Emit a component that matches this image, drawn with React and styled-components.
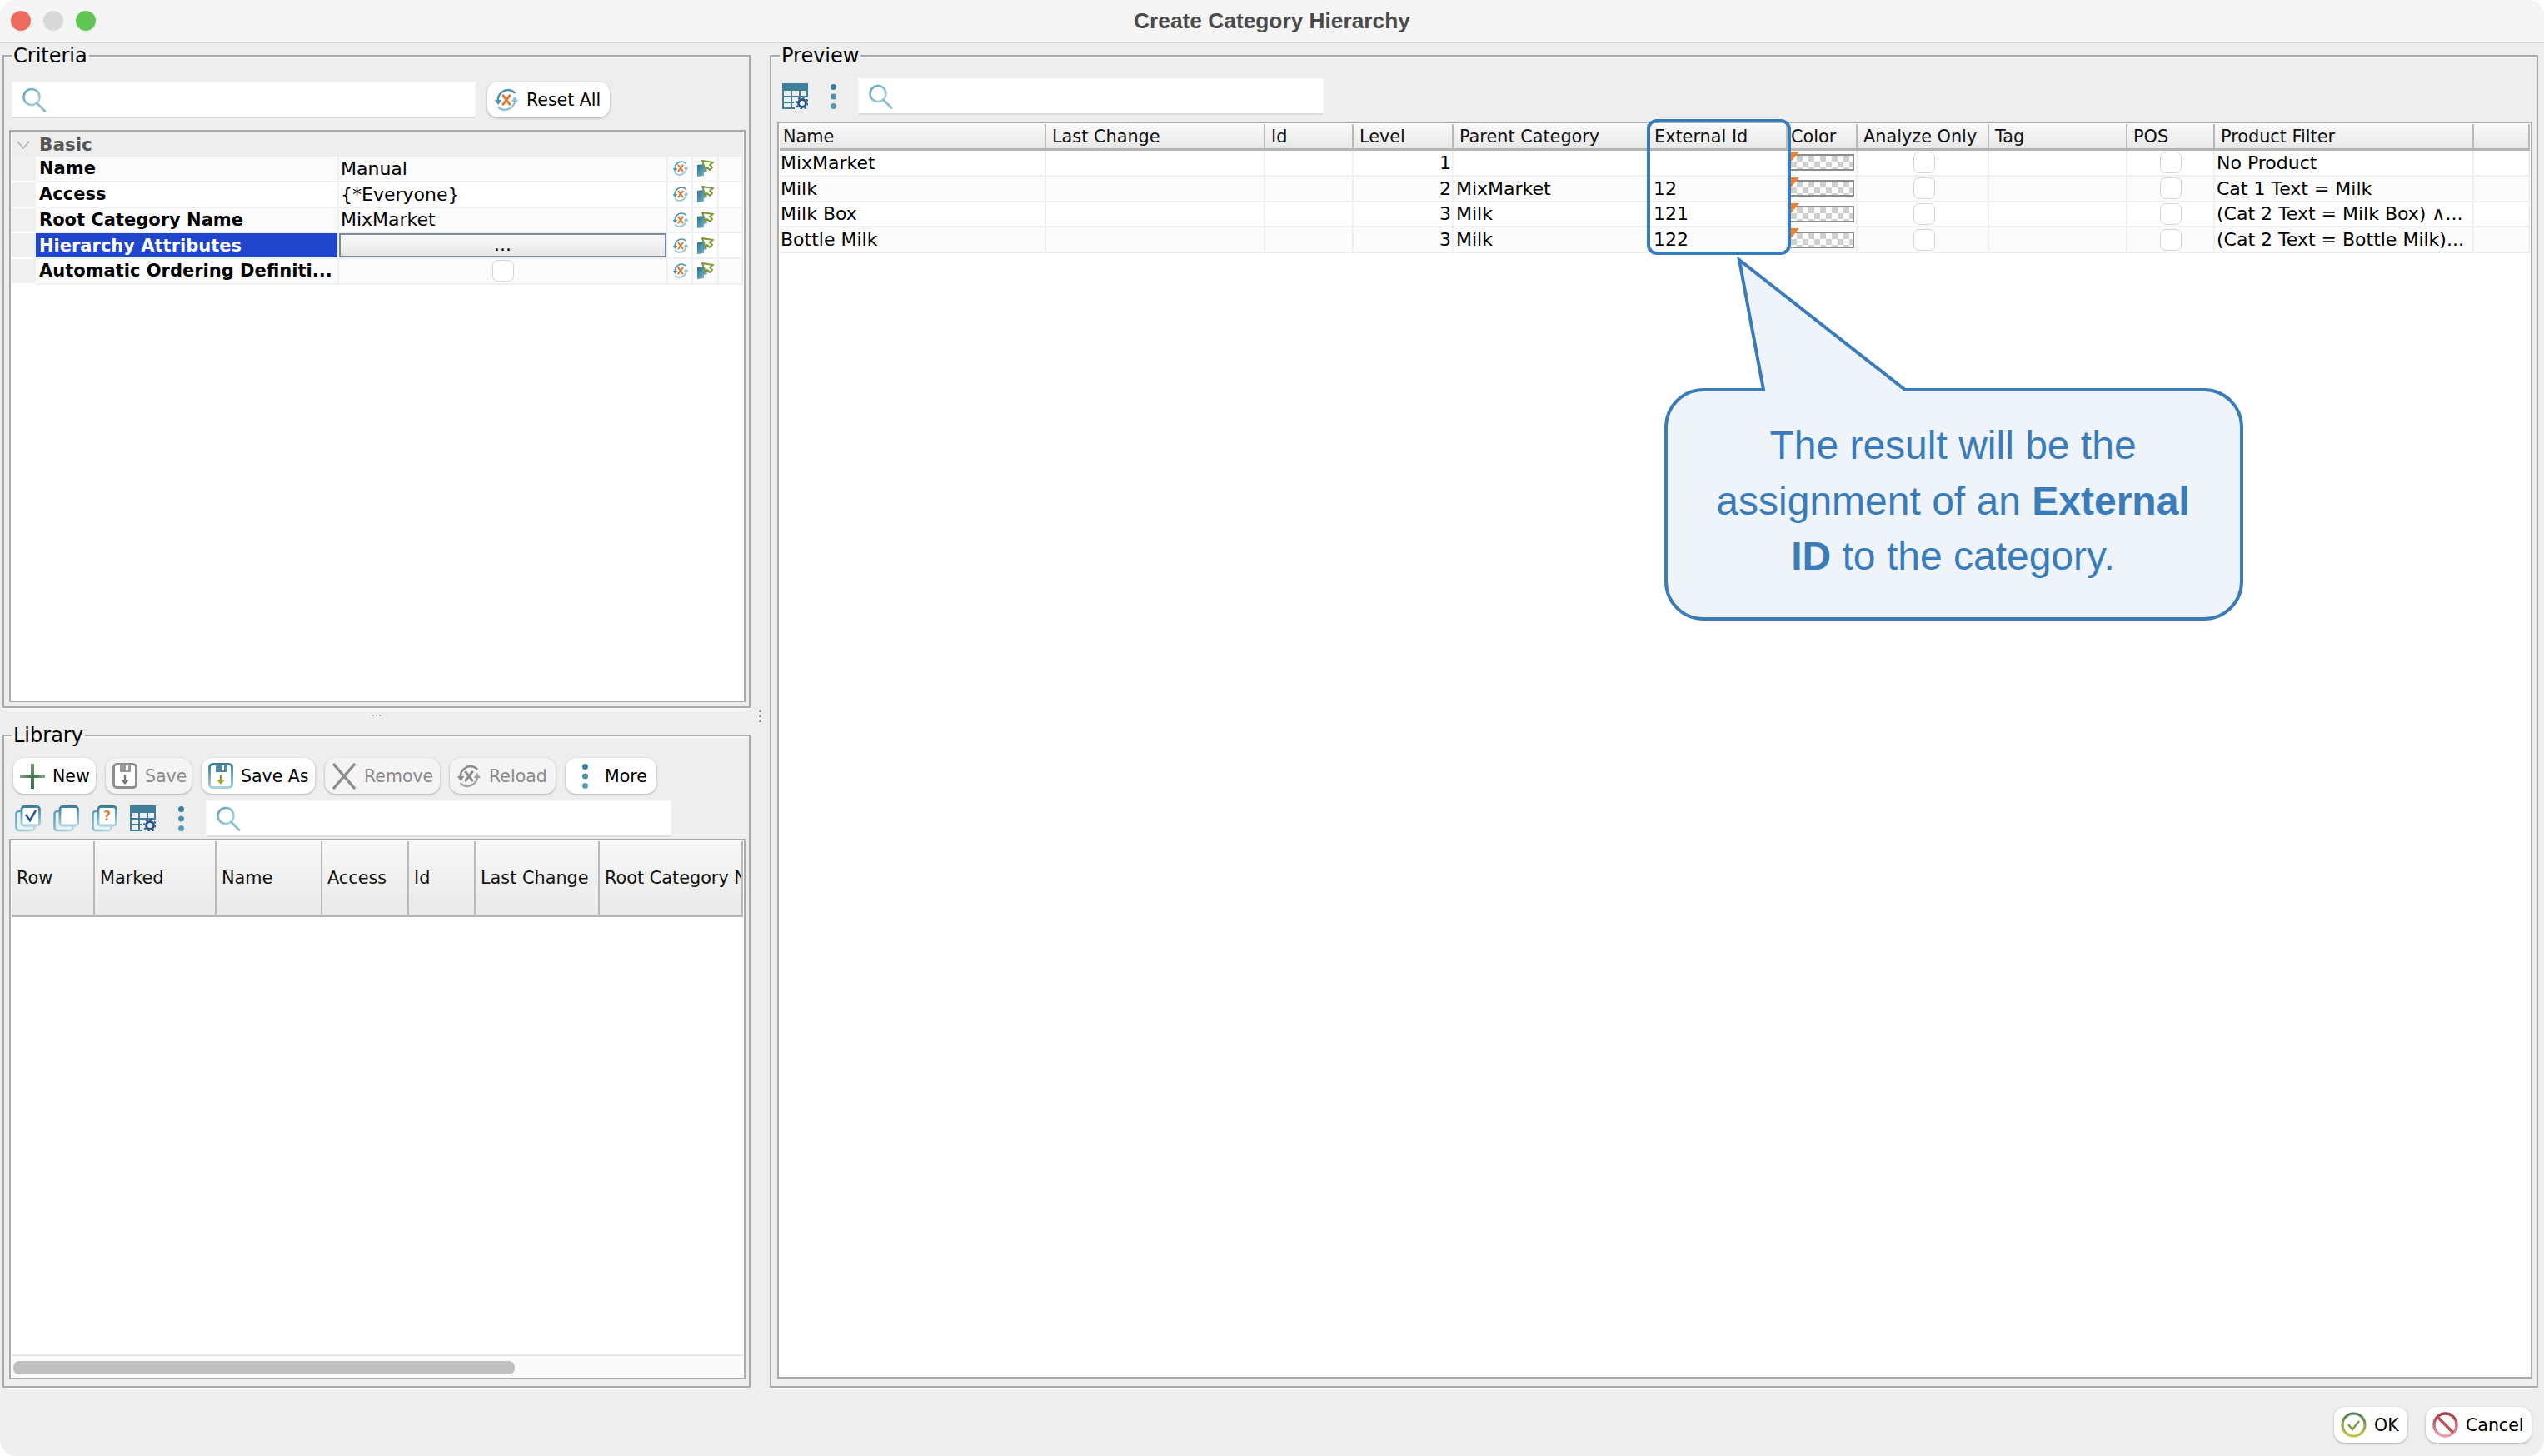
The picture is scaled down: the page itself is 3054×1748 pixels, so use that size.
import React from "react";
import styled, { createGlobalStyle } from "styled-components";

const GlobalStyle = createGlobalStyle`
  html, body { margin: 0; padding: 0; background: #fff; overflow: hidden; }
  #root { width: 3054px; height: 1748px; }
  * { box-sizing: border-box; }
`;

const uiFont = `"DejaVu Sans", "Liberation Sans", sans-serif`;

/* ---------- window chrome ---------- */

const Window = styled.div`
  width: 3054px;
  height: 1748px;
  background: #eeeeee;
  border-radius: 20px;
  overflow: hidden;
  display: flex;
  flex-direction: column;
  font-family: ${uiFont};
  color: #000;
`;

const TitleBar = styled.div`
  height: 52px;
  flex: none;
  display: grid;
  grid-template-columns: 1fr auto 1fr;
  align-items: center;
  background: #f5f5f5;
  border-bottom: 2px solid #d2d2d2;
`;

const Lights = styled.div`
  display: flex;
  gap: 15px;
  padding-left: 13px;
`;

const Light = styled.span`
  width: 24px;
  height: 24px;
  border-radius: 50%;
  background: ${(p) => p.$color};
`;

const Title = styled.div`
  font: bold 26.3px "Liberation Sans", Arial, sans-serif;
  color: #4b4b4b;
`;

const Body = styled.div`
  flex: none;
  height: 1614px;
  padding: 0 0 0 3px;
  display: flex;
`;

const LeftColumn = styled.div`
  width: 898px;
  flex: none;
  display: flex;
  flex-direction: column;
`;

const RightColumn = styled.div`
  width: 2123px;
  flex: none;
  position: relative;
  display: flex;
`;

const Group = styled.fieldset`
  margin: 0;
  min-width: 0;
  width: 100%;
  height: ${(p) => p.$h}px;
  flex: none;
  padding: 0 ${(p) => p.$right || 3}px 6px ${(p) => p.$left || 6}px;
  border: 2px solid #a9a9a9;
  box-shadow: 0 2px 0 #f8f8f8, inset 0 2px 0 #f8f8f8;
`;

const GroupTitle = styled.legend`
  margin-left: 3px;
  padding: 1px 2px 0;
  font-size: 24px;
  line-height: 28px;
`;

const Grip = styled.div`
  height: 18px;
  flex: none;
  display: flex;
  justify-content: center;
  font-size: 12px;
  line-height: 12px;
  color: #555;
`;

const SideGrip = styled.div`
  width: 23px;
  flex: none;
  padding-top: 800px;
  display: flex;
  flex-direction: column;
  align-items: center;
  gap: 3px;
  span { width: 3px; height: 3px; flex: none; background: #777; border-radius: 50%; }
`;

/* ---------- toolbars ---------- */

const ToolRow = styled.div`
  display: flex;
  align-items: center;
  gap: ${(p) => p.$gap || 12}px;
  padding: ${(p) => p.$top || 0}px 0 0 ${(p) => p.$left || 0}px;
`;

const SearchField = styled.div`
  width: ${(p) => p.$w}px;
  height: 41px;
  flex: none;
  display: flex;
  align-items: center;
  padding-left: 11px;
  background: #fff;
  box-shadow: 0 2px 0 #dcdcdc, 0 0 0 1px #f7f7f7;
`;

const ToolButton = styled.button`
  height: 43px;
  flex: none;
  width: ${(p) => p.$w}px;
  display: flex;
  align-items: center;
  gap: 9px;
  padding: 0 0 0 8px;
  border: 0;
  border-radius: 13px;
  font-family: ${uiFont};
  font-size: 20.5px;
  color: ${(p) => (p.disabled ? "#8a8a8a" : "#000")};
  background: ${(p) => (p.disabled ? "#f4f4f4" : "#fff")};
  box-shadow: 0 1px 3px rgba(0, 0, 0, 0.28);
`;

const IconSlot = styled.span`
  width: ${(p) => p.$w}px;
  flex: none;
  display: flex;
  justify-content: center;
`;

/* ---------- tables ---------- */

const Panel = styled.div`
  height: ${(p) => p.$h}px;
  margin-top: ${(p) => p.$top}px;
  margin-right: ${(p) => p.$mr || 0}px;
  border: 2px solid #aaaaaa;
  padding: 1px;
  background: #fff;
  display: flex;
  flex-direction: column;
  overflow: hidden;
`;

const Row = styled.div`
  display: grid;
  flex: none;
  grid-template-columns: ${(p) => p.$cols};
  height: ${(p) => p.$h}px;
`;

const HeaderRow = styled(Row)`
  background: linear-gradient(#f8f8f8, #e9e9e9);
  border-bottom: 3px solid #b4b4b4;
`;

const HeaderCell = styled.div`
  display: flex;
  align-items: center;
  padding-left: ${(p) => p.$pad || 5}px;
  font-size: 20.8px;
  color: #111;
  white-space: nowrap;
  overflow: hidden;
  border-right: 2px solid #b9b9b9;
`;

const Cell = styled.div`
  display: flex;
  align-items: center;
  justify-content: ${(p) => p.$justify || "flex-start"};
  padding: 0 ${(p) => (p.$justify === "flex-end" ? 1 : 0)}px 0 ${(p) => p.$pad ?? 2}px;
  font-size: 22px;
  white-space: nowrap;
  overflow: hidden;
  border-right: 2px solid #f0f0f0;
  border-bottom: 2px solid #f0f0f0;
  background: ${(p) => (p.$odd ? "#fbfbfb" : "#fff")};
  position: relative;
`;

const GroupRow = styled.div`
  height: 29px;
  flex: none;
  display: flex;
  align-items: center;
  gap: 11px;
  padding-left: 6px;
  background: #eeeeee;
  font-size: 21.5px;
  font-weight: bold;
  color: #555;
`;

const Gutter = styled.div`
  background: #f0f0f0;
  border-bottom: 2px solid #fff;
`;

const LabelCell = styled(Cell)`
  font-weight: bold;
  font-size: 21px;
  padding-left: 4px;
  background: ${(p) => (p.$selected ? "#2046cd" : p.$odd ? "#fbfbfb" : "#fff")};
  color: ${(p) => (p.$selected ? "#fff" : "#000")};
`;

const DotsButton = styled.div`
  width: 100%;
  height: 100%;
  display: flex;
  justify-content: center;
  align-items: center;
  padding-bottom: 2px;
  background: linear-gradient(#fafafa, #e6e6e6);
  border: 2px solid #7f8a99;
  font-size: 22px;
  line-height: 22px;
`;

const Check = styled.span`
  width: 26px;
  height: 26px;
  flex: none;
  background: #fff;
  border: 1.5px solid #d4d4d4;
  border-radius: 7px;
`;

const Swatch = styled.span`
  width: 76px;
  height: 20px;
  flex: none;
  border: 2px solid #8c8c8c;
  border-left: 0;
  background-color: #fff;
  background-image: conic-gradient(#cfcfcf 25%, #fff 0 50%, #cfcfcf 0 75%, #fff 0);
  background-size: 14px 14px;
`;

const SwatchMark = styled.span`
  position: absolute;
  left: 4px;
  top: 1px;
  width: 0;
  height: 0;
  border-top: 12px solid #ea8333;
  border-right: 10px solid transparent;
`;

const ScrollTrack = styled.div`
  margin-top: auto;
  height: 27px;
  flex: none;
  padding: 6px 0 0 2px;
  background: #fafafa;
  border-top: 2px solid #e6e6e6;
`;

const ScrollThumb = styled.div`
  width: 602px;
  height: 16px;
  background: #c0c0c0;
  border-radius: 7px;
`;

const Highlight = styled.div`
  position: absolute;
  left: 1053px;
  top: 91px;
  width: 173px;
  height: 163px;
  border: 4px solid #3a7bb9;
  border-radius: 12px;
  pointer-events: none;
`;

const Callout = styled.div`
  position: absolute;
  left: 1074px;
  top: 256px;
  width: 696px;
  height: 438px;
`;

const CalloutShape = styled.svg`
  display: block;
  width: 696px;
  height: 438px;
`;

const CalloutText = styled.div`
  position: absolute;
  left: 0;
  right: 3px;
  top: 194px;
  text-align: center;
  font: 48px/66.5px "Liberation Sans", Arial, sans-serif;
  color: #3a7bb9;
  b { font-weight: bold; }
`;

const Footer = styled.div`
  flex: 1;
  display: flex;
  justify-content: flex-end;
  gap: 22px;
  padding: 23px 15px 0 0;
`;

const DefsHolder = styled.svg`
  display: block;
  width: 0;
  height: 0;
`;

/* ---------- icons ---------- */

function Defs() {
  return (
    <DefsHolder aria-hidden="true">
      <defs>
        <linearGradient id="tealTop" x1="0" y1="0" x2="0" y2="1">
          <stop offset="0" stopColor="#3a7f9c" />
          <stop offset="1" stopColor="#a8d2de" />
        </linearGradient>
        <linearGradient id="tealBack" x1="0" y1="0" x2="1" y2="1">
          <stop offset="0" stopColor="#5c9fb6" />
          <stop offset="1" stopColor="#b9dbe4" />
        </linearGradient>
        <linearGradient id="plusH" x1="0" y1="0" x2="1" y2="0">
          <stop offset="0" stopColor="#86a888" />
          <stop offset="0.5" stopColor="#3f6b48" />
          <stop offset="1" stopColor="#86a888" />
        </linearGradient>
        <linearGradient id="plusV" x1="0" y1="0" x2="0" y2="1">
          <stop offset="0" stopColor="#6f9b72" />
          <stop offset="1" stopColor="#3c6e48" />
        </linearGradient>
        <linearGradient id="okRing" x1="0" y1="0" x2="0" y2="1">
          <stop offset="0" stopColor="#4f7f58" />
          <stop offset="1" stopColor="#c5c545" />
        </linearGradient>
        <linearGradient id="noRing" x1="0" y1="0" x2="0" y2="1">
          <stop offset="0" stopColor="#a63c42" />
          <stop offset="1" stopColor="#e6a2b2" />
        </linearGradient>
        <linearGradient id="arrowBack" x1="0" y1="0" x2="1" y2="1">
          <stop offset="0" stopColor="#1f6f8c" />
          <stop offset="1" stopColor="#8fc4d4" />
        </linearGradient>
      </defs>
    </DefsHolder>
  );
}

const SearchIcon = () => (
  <svg width="31" height="30" viewBox="0 0 31 30" fill="none">
    <circle cx="12" cy="11.5" r="9.5" stroke="url(#tealBack)" strokeWidth="2.6" />
    <path d="M18.5 19 28 28.5" stroke="#8fc0cf" strokeWidth="3" strokeLinecap="round" />
  </svg>
);

const ResetIcon = ({ size = 20, gray, cross = "#dd7a30" }) => {
  const top = gray ? "#8a8a8a" : "#4f93ae";
  const bottom = gray ? "#a2a2a2" : "#8fc0d0";
  return (
    <svg width={size} height={size} viewBox="0 0 32 32" fill="none">
      <path d="M5.5 18C3.5 9 13 1 22 4c2 .7 3.5 1.700 5 3.500" stroke={top} strokeWidth="2.6" />
      <path d="M1 16h9l-4.500 6.500z" fill={top} />
      <path d="M26.500 14C28.500 23 19 31 10 28c-2-.7-3.500-1.700-5-3.500" stroke={bottom} strokeWidth="2.6" />
      <path d="M31 18h-9l4.500-6.500z" fill={bottom} />
      <path d="M11 9.500l10 13M21 9.500l-10 13" stroke={cross} strokeWidth="3.200" />
    </svg>
  );
};

const CursorIcon = () => (
  <svg width="20" height="20" viewBox="0 0 20 20">
    <path d="M0 6l9-1 3 9-4 1v4l-8 1z" fill="url(#arrowBack)" />
    <path d="M6 1l13 2-4 3 3 3-3 3-3-3-2 3z" fill="#fff" stroke="#7f9a3a" strokeWidth="2" strokeLinejoin="round" />
  </svg>
);

const PlusIcon = () => (
  <svg width="30" height="30" viewBox="0 0 30 30">
    <rect x="13" y="0" width="4" height="30" fill="url(#plusV)" />
    <rect x="0" y="13" width="30" height="4" fill="url(#plusH)" />
  </svg>
);

const FloppyIcon = ({ gray }) => (
  <svg width="30" height="31" viewBox="0 0 30 31" fill="none">
    <rect
      x="1.500"
      y="1.500"
      width="27"
      height="28"
      rx="4"
      fill="#fff"
      stroke={gray ? "#8e8e8e" : "url(#tealTop)"}
      strokeWidth="3"
    />
    <path d="M9 2h13v9H9z" fill={gray ? "#9a9a9a" : "#4a8ba5"} />
    <path d="M16 3h3v6h-3z" fill="#fff" />
    <path d="M15 14v8" stroke={gray ? "#777" : "#7f9a3a"} strokeWidth="2.400" />
    <path d="M10 20h10l-5 6z" fill={gray ? "#777" : "#9aa92f"} />
  </svg>
);

const RemoveIcon = () => (
  <svg width="30" height="32" viewBox="0 0 30 32">
    <path d="M2 1l26 30M28 1L2 31" stroke="#8d8d8d" strokeWidth="3.400" />
  </svg>
);

const Dots = () => (
  <svg width="9" height="32" viewBox="0 0 9 32">
    <circle cx="4.500" cy="4.500" r="3.500" fill="#3a7f9c" />
    <circle cx="4.500" cy="16" r="3.500" fill="#4f8fa8" />
    <circle cx="4.500" cy="27.500" r="3.500" fill="#5d9bb2" />
  </svg>
);

const TableGearIcon = () => (
  <svg width="31" height="31" viewBox="0 0 31 31" fill="none">
    <rect x="0" y="0" width="31" height="9" fill="#3f7f9a" />
    <path
      d="M1 9v21h14M1 16h30M1 23h13M11 9v21M21 9v9M30 9v8"
      stroke="#3f7f9a"
      strokeWidth="2"
    />
    <circle cx="24" cy="24" r="4.500" stroke="#26558c" strokeWidth="3" />
    <circle cx="24" cy="24" r="7" stroke="#26558c" strokeWidth="2" strokeDasharray="2.500 3" />
  </svg>
);

const StackIcon = ({ children }) => (
  <svg width="31" height="32" viewBox="0 0 31 32" fill="none">
    <rect x="1.500" y="7" width="22" height="23" rx="3.500" fill="#e9f2f5" stroke="url(#tealBack)" strokeWidth="2.600" />
    <rect x="8" y="1.500" width="21.500" height="22.500" rx="3" fill="#fff" stroke="url(#tealTop)" strokeWidth="2.800" />
    {children}
  </svg>
);

const OkIcon = () => (
  <svg width="31" height="31" viewBox="0 0 31 31" fill="none">
    <circle cx="15.500" cy="15.500" r="13.500" stroke="url(#okRing)" strokeWidth="3.200" />
    <path d="M9 15l5 6 8-10" stroke="#7f9c3f" strokeWidth="2.600" />
  </svg>
);

const CancelIcon = () => (
  <svg width="31" height="31" viewBox="0 0 31 31" fill="none">
    <circle cx="15.500" cy="15.500" r="13.500" stroke="url(#noRing)" strokeWidth="3.600" />
    <path d="M6 6l19 19" stroke="#b95058" strokeWidth="3.600" />
  </svg>
);

const Chevron = () => (
  <svg width="16" height="10" viewBox="0 0 16 10" fill="none">
    <path d="M1 1l7 8 7-8" stroke="#b4b4b4" strokeWidth="1.800" />
  </svg>
);

/* ---------- data ---------- */

const propertyCols = "29px 364px 395px 30px 31px 1fr";
const properties = [
  { label: "Name", value: "Manual" },
  { label: "Access", value: "{*Everyone}" },
  { label: "Root Category Name", value: "MixMarket" },
  { label: "Hierarchy Attributes", button: true, selected: true },
  { label: "Automatic Ordering Definiti...", check: true },
];

const previewCols = "320px 263px 106px 120px 234px 167px 84px 158px 166px 105px 311px 1fr";
const previewHead = [
  "Name",
  "Last Change",
  "Id",
  "Level",
  "Parent Category",
  "External Id",
  "Color",
  "Analyze Only",
  "Tag",
  "POS",
  "Product Filter",
  "",
];
const previewRows = [
  { name: "MixMarket", level: 1, parent: "", ext: "", filter: "No Product" },
  { name: "Milk", level: 2, parent: "MixMarket", ext: "12", filter: "Cat 1 Text = Milk" },
  { name: "Milk Box", level: 3, parent: "Milk", ext: "121", filter: "(Cat 2 Text = Milk Box) ∧..." },
  { name: "Bottle Milk", level: 3, parent: "Milk", ext: "122", filter: "(Cat 2 Text = Bottle Milk)..." },
];

const libraryCols = "100px 146px 127px 104px 80px 149px 1fr";
const libraryHead = ["Row", "Marked", "Name", "Access", "Id", "Last Change", "Root Category Name"];

/* ---------- panels ---------- */

function CriteriaGroup() {
  return (
    <Group $h={798}>
      <GroupTitle>Criteria</GroupTitle>
      <ToolRow $top={17} $left={4} $gap={15}>
        <SearchField $w={555}>
          <SearchIcon />
        </SearchField>
        <ToolButton $w={147}>
          <ResetIcon size={30} />
          Reset All
        </ToolButton>
      </ToolRow>
      <Panel $h={687} $top={15} $mr={1}>
        <GroupRow>
          <Chevron />
          Basic
        </GroupRow>
        {properties.map((p, i) => (
          <Row key={p.label} $cols={propertyCols} $h={30.75}>
            <Gutter />
            <LabelCell $odd={i % 2 === 0} $selected={p.selected}>
              {p.label}
            </LabelCell>
            <Cell $odd={i % 2 === 0} $pad={p.value ? 2 : 0} $justify={p.check ? "center" : undefined}>
              {p.value}
              {p.button && <DotsButton>...</DotsButton>}
              {p.check && <Check />}
            </Cell>
            <Cell $odd={i % 2 === 0} $pad={5}>
              <ResetIcon />
            </Cell>
            <Cell $odd={i % 2 === 0} $pad={5}>
              <CursorIcon />
            </Cell>
            <Cell $odd={i % 2 === 0} />
          </Row>
        ))}
      </Panel>
    </Group>
  );
}

function LibraryGroup() {
  return (
    <Group $h={798}>
      <GroupTitle>Library</GroupTitle>
      <ToolRow $top={13} $left={5} $gap={12}>
        <ToolButton $w={99}>
          <PlusIcon />
          New
        </ToolButton>
        <ToolButton $w={103} disabled>
          <FloppyIcon gray />
          Save
        </ToolButton>
        <ToolButton $w={136}>
          <FloppyIcon />
          Save As
        </ToolButton>
        <ToolButton $w={138} disabled>
          <RemoveIcon />
          Remove
        </ToolButton>
        <ToolButton $w={127} disabled>
          <ResetIcon size={30} gray cross="#8a8a8a" />
          Reload
        </ToolButton>
        <ToolButton $w={109}>
          <IconSlot $w={30}>
            <Dots />
          </IconSlot>
          More
        </ToolButton>
      </ToolRow>
      <ToolRow $top={9} $left={7} $gap={15}>
        <StackIcon>
          <path d="M13 11l5 7 7-12" stroke="#2c5a9c" strokeWidth="2.600" />
        </StackIcon>
        <StackIcon />
        <StackIcon>
          <text x="18.500" y="18" fontSize="15" fontWeight="bold" fill="#dc7a30" fontFamily="DejaVu Sans" textAnchor="middle">
            ?
          </text>
        </StackIcon>
        <TableGearIcon />
        <IconSlot $w={31}>
          <Dots />
        </IconSlot>
        <SearchField $w={557}>
          <SearchIcon />
        </SearchField>
      </ToolRow>
      <Panel $h={649} $top={4} $mr={1}>
        <HeaderRow $cols={libraryCols} $h={91}>
          {libraryHead.map((h) => (
            <HeaderCell key={h} $pad={6}>
              {h}
            </HeaderCell>
          ))}
        </HeaderRow>
        <ScrollTrack>
          <ScrollThumb />
        </ScrollTrack>
      </Panel>
    </Group>
  );
}

function PreviewGroup() {
  return (
    <Group $h={1614} $left={7} $right={5}>
      <GroupTitle>Preview</GroupTitle>
      <ToolRow $top={14} $left={6} $gap={26}>
        <TableGearIcon />
        <IconSlot $w={9}>
          <Dots />
        </IconSlot>
        <SearchField $w={557}>
          <SearchIcon />
        </SearchField>
      </ToolRow>
      <Panel $h={1509} $top={10}>
        <HeaderRow $cols={previewCols} $h={32}>
          {previewHead.map((h, i) => (
            <HeaderCell key={i} $pad={i === 0 ? 4 : i === 6 ? 4 : 7}>
              {h}
            </HeaderCell>
          ))}
        </HeaderRow>
        {previewRows.map((r, i) => (
          <Row key={r.name} $cols={previewCols} $h={30.75}>
            <Cell $odd={i % 2 === 1} $pad={1}>
              {r.name}
            </Cell>
            <Cell $odd={i % 2 === 1} />
            <Cell $odd={i % 2 === 1} />
            <Cell $odd={i % 2 === 1} $justify="flex-end">
              {r.level}
            </Cell>
            <Cell $odd={i % 2 === 1} $pad={3}>
              {r.parent}
            </Cell>
            <Cell $odd={i % 2 === 1} $pad={6}>
              {r.ext}
            </Cell>
            <Cell $odd={i % 2 === 1} $pad={4}>
              <SwatchMark />
              <Swatch />
            </Cell>
            <Cell $odd={i % 2 === 1} $pad={3} $justify="center">
              <Check />
            </Cell>
            <Cell $odd={i % 2 === 1} />
            <Cell $odd={i % 2 === 1} $pad={0} $justify="center">
              <Check />
            </Cell>
            <Cell $odd={i % 2 === 1} $pad={2}>
              {r.filter}
            </Cell>
            <Cell $odd={i % 2 === 1} />
          </Row>
        ))}
      </Panel>
    </Group>
  );
}

export default function App() {
  return (
    <>
      <GlobalStyle />
      <Defs />
      <Window>
        <TitleBar>
          <Lights>
            <Light $color="#ed6a5e" />
            <Light $color="#d8d8d8" />
            <Light $color="#61c554" />
          </Lights>
          <Title>Create Category Hierarchy</Title>
        </TitleBar>
        <Body>
          <LeftColumn>
            <CriteriaGroup />
            <Grip>...</Grip>
            <LibraryGroup />
          </LeftColumn>
          <SideGrip>
            <span />
            <span />
            <span />
          </SideGrip>
          <RightColumn>
            <PreviewGroup />
            <Highlight />
            <Callout>
              <CalloutShape viewBox="0 0 696 438">
                <path
                  d="M47 160H119L90 4 289 160H648A45 45 0 0 1 693 205V390A45 45 0 0 1 648 435H47A45 45 0 0 1 2 390V205A45 45 0 0 1 47 160Z"
                  fill="#eef4fa"
                  stroke="#3a7bb9"
                  strokeWidth="4"
                />
              </CalloutShape>
              <CalloutText>
                The result will be the
                <br />
                assignment of an <b>External</b>
                <br />
                <b>ID</b> to the category.
              </CalloutText>
            </Callout>
          </RightColumn>
        </Body>
        <Footer>
          <ToolButton $w={88}>
            <OkIcon />
            OK
          </ToolButton>
          <ToolButton $w={127}>
            <CancelIcon />
            Cancel
          </ToolButton>
        </Footer>
      </Window>
    </>
  );
}
